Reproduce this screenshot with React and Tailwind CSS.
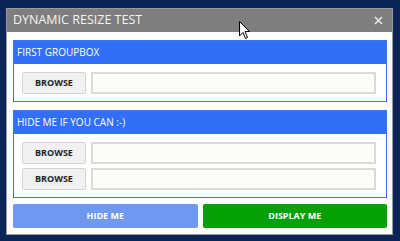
const font = { fontFamily: '"Open Sans", "Noto Sans", sans-serif' };

function BrowseRow() {
  return (
    <div className="flex h-[22px] gap-[5px]">
      <button className="w-[64px] h-full rounded-[2px] border border-[#d4d4d4] bg-[#f1f1f1] text-[9px] font-bold text-[#222]">
        BROWSE
      </button>
      <div className="flex-1 h-full border-2 border-[#dcdcd6] bg-[#fcfcfa]" />
    </div>
  );
}

function GroupBox({ title, children }) {
  return (
    <div className="border border-[#3a74f2]">
      <div className="h-[23px] bg-[#3170f6] px-[3px] flex items-center text-[10px] text-white">
        {title}
      </div>
      <div className="pl-[8px] pr-[10px] pt-[8px] pb-[7px] flex flex-col gap-[4px] bg-white">
        {children}
      </div>
    </div>
  );
}

export default function App() {
  return (
    <div className="relative w-[400px] h-[241px] bg-[#0b2556] pt-[8px] pl-[6px]" style={font}>
      <div className="w-[387px] h-[227px] bg-[#fdfdfd] border border-[#9a9a9a] flex flex-col">
        <div className="h-[23px] bg-[#7e7e7e] flex items-center justify-between pl-[6px] pr-[9px]">
          <span className="text-[12.5px] text-[#f4f4f4]">DYNAMIC RESIZE TEST</span>
          <svg width="9" height="9" viewBox="0 0 9 9">
            <path d="M1 1L8 8M8 1L1 8" stroke="#e8e8e8" strokeWidth="1.6" />
          </svg>
        </div>
        <div className="flex flex-col pl-[6px] pr-[5px] pt-[8px] gap-[8px]">
          <GroupBox title="FIRST GROUPBOX">
            <BrowseRow />
          </GroupBox>
          <GroupBox title="HIDE ME IF YOU CAN :-)">
            <BrowseRow />
            <BrowseRow />
          </GroupBox>
          <div className="flex gap-[5px] h-[24px] mt-[-2px]">
            <button className="flex-1 rounded-[2px] bg-[#6f98f0] text-white text-[9px] font-bold">HIDE ME</button>
            <button className="flex-1 rounded-[2px] bg-[#05a005] text-white text-[9px] font-bold">DISPLAY ME</button>
          </div>
        </div>
      </div>
      <svg className="absolute left-[239px] top-[21px]" width="12" height="19" viewBox="0 0 12 19">
        <path d="M0.5 0.5 L0.5 15 L4 11.5 L6.5 17.5 L8.5 16.5 L6 10.5 L10.5 10.5 Z" fill="#fff" stroke="#000" strokeWidth="1" />
      </svg>
    </div>
  );
}
